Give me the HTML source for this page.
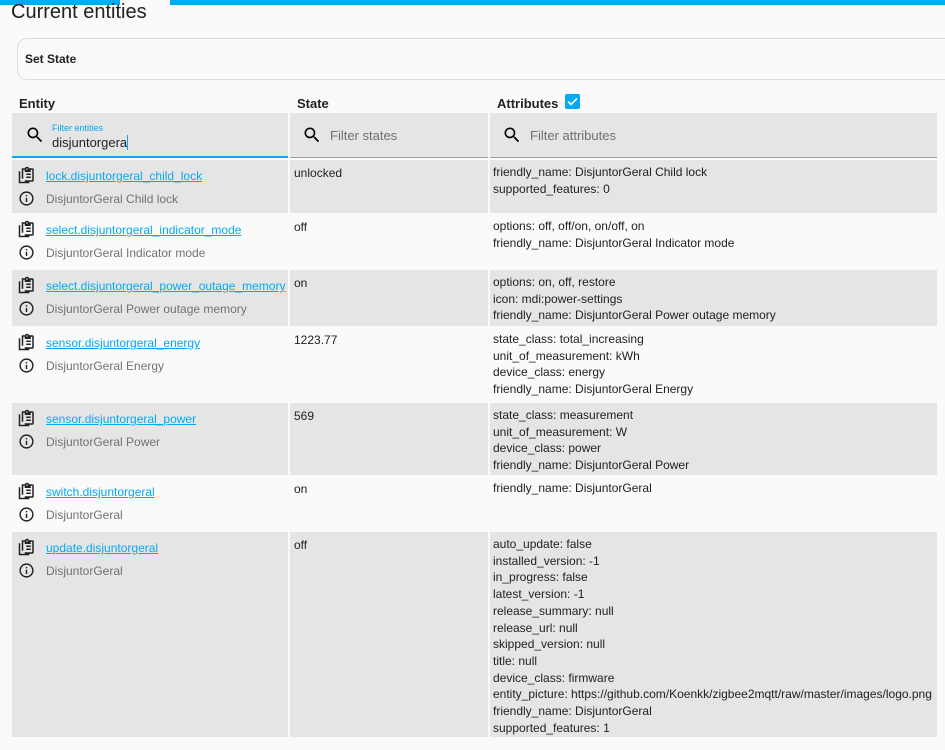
<!DOCTYPE html>
<html><head><meta charset="utf-8"><style>
*{margin:0;padding:0;box-sizing:border-box}
body{width:945px;height:750px;background:#fafafa;font-family:"Liberation Sans",sans-serif;font-size:12px;color:#212121;position:relative;overflow:hidden}
.a{position:absolute}
.g{background:#e5e5e5}
.lnk{color:#03a9f4;text-decoration:underline}
.sub{color:#727272}
.t{line-height:16.7px}
.th{font-weight:bold;font-size:13px}
.ph{color:#6f6f6f;font-size:13px}
</style></head><body>
<div class="a" style="left:0;top:0;width:120px;height:5px;background:#03a9f4"></div>
<div class="a" style="left:170px;top:0;width:775px;height:5px;background:#03a9f4"></div>
<div class="a" style="left:11px;top:1px;font-size:20px;color:#212121">Current entities</div>
<div class="a" style="left:17px;top:38px;width:940px;height:42px;border:1px solid #ddd;border-radius:10px;background:#fafafa"></div>
<div class="a" style="left:25px;top:52px;font-weight:bold">Set State</div>
<div class="a th" style="left:19px;top:96px">Entity</div>
<div class="a th" style="left:297px;top:96px">State</div>
<div class="a th" style="left:497px;top:96px">Attributes</div>
<div class="a" style="left:565px;top:94px;width:15px;height:15px;background:#03a9f4;border-radius:2px"><svg width="15" height="15"><path d="M3 7.5l3 3 6-6" stroke="#fff" stroke-width="1.6" fill="none"/></svg></div>
<div class="a g" style="left:12px;top:113px;width:276px;height:45px;border-bottom:2px solid #03a9f4"></div>
<div class="a g" style="left:290px;top:113px;width:198px;height:45px;border-bottom:1px solid #999"></div>
<div class="a g" style="left:490px;top:113px;width:447px;height:45px;border-bottom:1px solid #999"></div>
<svg class="a" style="left:25px;top:125px" width="20" height="20" viewBox="0 0 24 24"><path d="M9.5 3A6.5 6.5 0 0 1 16 9.5c0 1.61-.59 3.09-1.56 4.23l.27.27h.79l5 5-1.5 1.5-5-5v-.79l-.27-.27A6.52 6.52 0 0 1 9.5 16 6.5 6.5 0 0 1 3 9.5 6.5 6.5 0 0 1 9.5 3m0 2C7 5 5 7 5 9.5S7 14 9.5 14 14 12 14 9.5 12 5 9.5 5z"/></svg>
<svg class="a" style="left:302px;top:125px" width="20" height="20" viewBox="0 0 24 24"><path d="M9.5 3A6.5 6.5 0 0 1 16 9.5c0 1.61-.59 3.09-1.56 4.23l.27.27h.79l5 5-1.5 1.5-5-5v-.79l-.27-.27A6.52 6.52 0 0 1 9.5 16 6.5 6.5 0 0 1 3 9.5 6.5 6.5 0 0 1 9.5 3m0 2C7 5 5 7 5 9.5S7 14 9.5 14 14 12 14 9.5 12 5 9.5 5z"/></svg>
<svg class="a" style="left:502px;top:125px" width="20" height="20" viewBox="0 0 24 24"><path d="M9.5 3A6.5 6.5 0 0 1 16 9.5c0 1.61-.59 3.09-1.56 4.23l.27.27h.79l5 5-1.5 1.5-5-5v-.79l-.27-.27A6.52 6.52 0 0 1 9.5 16 6.5 6.5 0 0 1 3 9.5 6.5 6.5 0 0 1 9.5 3m0 2C7 5 5 7 5 9.5S7 14 9.5 14 14 12 14 9.5 12 5 9.5 5z"/></svg>
<div class="a" style="left:52px;top:123px;font-size:9px;color:#03a9f4">Filter entities</div>
<div class="a" style="left:52px;top:135px;font-size:13px">disjuntorgera<span style="border-left:1px solid #03a9f4"></span></div>
<div class="a ph" style="left:330px;top:128px">Filter states</div>
<div class="a ph" style="left:530px;top:128px">Filter attributes</div>

<div id="rows"></div>
<script>
const clip='<svg width="18" height="18" viewBox="0 0 24 24"><path d="M19 3h-4.18C14.4 1.84 13.3 1 12 1s-2.4.84-2.82 2H5v14h2V5h2v3h8V5h2v14H9v2h10a2 2 0 0 0 2-2V5a2 2 0 0 0-2-2zm-7 0a1 1 0 1 1 0 2 1 1 0 0 1 0-2zM3 7H1v16h14v-2H3zm8 3h6v2h-6zm0 4h6v2h-6z" fill="#212121"/></svg>';
const info='<svg width="17" height="17" viewBox="0 0 24 24"><circle cx="12" cy="12" r="9" stroke="#212121" stroke-width="2" fill="none"/><path d="M11 11h2v6h-2zm0-4h2v2h-2z" fill="#212121"/></svg>';
const R=[
[160,53,1,"lock.disjuntorgeral_child_lock","DisjuntorGeral Child lock","unlocked",["friendly_name: DisjuntorGeral Child lock","supported_features: 0"]],
[214,55,0,"select.disjuntorgeral_indicator_mode","DisjuntorGeral Indicator mode","off",["options: off, off/on, on/off, on","friendly_name: DisjuntorGeral Indicator mode"]],
[270,56,1,"select.disjuntorgeral_power_outage_memory","DisjuntorGeral Power outage memory","on",["options: on, off, restore","icon: mdi:power-settings","friendly_name: DisjuntorGeral Power outage memory"]],
[327,75,0,"sensor.disjuntorgeral_energy","DisjuntorGeral Energy","1223.77",["state_class: total_increasing","unit_of_measurement: kWh","device_class: energy","friendly_name: DisjuntorGeral Energy"]],
[403,72,1,"sensor.disjuntorgeral_power","DisjuntorGeral Power","569",["state_class: measurement","unit_of_measurement: W","device_class: power","friendly_name: DisjuntorGeral Power"]],
[476,55,0,"switch.disjuntorgeral","DisjuntorGeral","on",["friendly_name: DisjuntorGeral"]],
[532,205,1,"update.disjuntorgeral","DisjuntorGeral","off",["auto_update: false","installed_version: -1","in_progress: false","latest_version: -1","release_summary: null","release_url: null","skipped_version: null","title: null","device_class: firmware","entity_picture: https://github.com/Koenkk/zigbee2mqtt/raw/master/images/logo.png","friendly_name: DisjuntorGeral","supported_features: 1"]]];
let h='';
for(const [y,ht,g,e,n,s,at] of R){
 const c=g?' g':'';
 h+=`<div class="a${c}" style="left:12px;top:${y}px;width:276px;height:${ht}px"></div><div class="a${c}" style="left:290px;top:${y}px;width:198px;height:${ht}px"></div><div class="a${c}" style="left:490px;top:${y}px;width:447px;height:${ht}px"></div>`;
 h+=`<div class="a" style="left:18px;top:${y+6}px">${clip}</div><div class="a lnk" style="left:46px;top:${y+9}px">${e}</div>`;
 h+=`<div class="a" style="left:18px;top:${y+30}px">${info}</div><div class="a sub" style="left:46px;top:${y+32}px">${n}</div>`;
 h+=`<div class="a" style="left:294px;top:${y+6}px">${s}</div>`;
 h+=`<div class="a t" style="left:493px;top:${y+4}px">${at.join('<br>')}</div>`;
}
document.getElementById('rows').outerHTML=h;
</script>
</body></html>
